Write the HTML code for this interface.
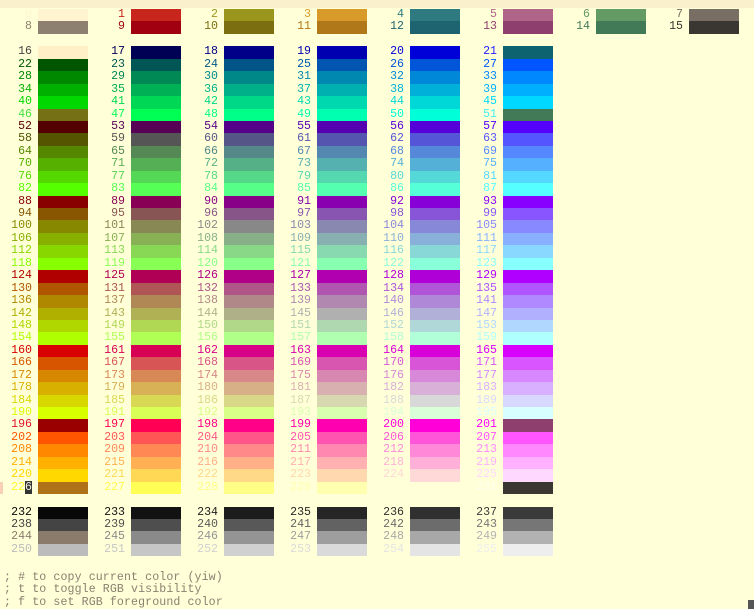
<!DOCTYPE html>
<html><head><meta charset="utf-8"><style>
body{margin:0;width:754px;height:609px;background:#ffffd8;position:relative;overflow:hidden;font-family:"Liberation Mono",monospace;font-size:11.6px}
.top{position:absolute;left:0;top:0;width:754px;height:8px;background:#faf0cc}
.g{position:absolute;left:0;top:9px}
.r{display:flex;height:12.45px;line-height:12.45px;white-space:nowrap}
.c{width:93px;height:12.45px;flex:none}
.c i{display:inline-block;width:32px;text-align:right;font-style:normal;color:var(--c);vertical-align:top}
.c b{display:inline-block;width:50px;height:12.45px;margin-left:6px;vertical-align:top;background:var(--c)}
.cur{background:#333;color:#f0f0e0}
.cm{color:#8a8070;padding-left:4px;height:12.45px;line-height:12.45px;white-space:pre;letter-spacing:0.1px;position:relative;top:3px}
</style></head><body>
<div class="top"></div>
<div style="position:absolute;left:0;top:482px;width:3px;height:12.45px;background:#f8d0b8"></div>
<div class="g">
<div class="r"><span class="c" style="--c:#fff3d0"><i>0</i><b></b></span><span class="c" style="--c:#c8251c"><i>1</i><b></b></span><span class="c" style="--c:#9a951c"><i>2</i><b></b></span><span class="c" style="--c:#d89a28"><i>3</i><b></b></span><span class="c" style="--c:#2e7a80"><i>4</i><b></b></span><span class="c" style="--c:#b06488"><i>5</i><b></b></span><span class="c" style="--c:#649a64"><i>6</i><b></b></span><span class="c" style="--c:#786e64"><i>7</i><b></b></span></div>
<div class="r"><span class="c" style="--c:#8e8070"><i>8</i><b></b></span><span class="c" style="--c:#a00010"><i>9</i><b></b></span><span class="c" style="--c:#7a6e10"><i>10</i><b></b></span><span class="c" style="--c:#b07818"><i>11</i><b></b></span><span class="c" style="--c:#1e6470"><i>12</i><b></b></span><span class="c" style="--c:#8e3f6e"><i>13</i><b></b></span><span class="c" style="--c:#427a58"><i>14</i><b></b></span><span class="c" style="--c:#3a3632"><i>15</i><b></b></span></div>
<div class="r"></div>
<div class="r"><span class="c" style="--c:#fff0c8"><i style="color:#444">16</i><b></b></span><span class="c" style="--c:#000055"><i>17</i><b></b></span><span class="c" style="--c:#000088"><i>18</i><b></b></span><span class="c" style="--c:#0000b0"><i>19</i><b></b></span><span class="c" style="--c:#0000d8"><i>20</i><b></b></span><span class="c" style="--c:#0d6470"><i style="color:#2020ff">21</i><b></b></span></div>
<div class="r"><span class="c" style="--c:#005500"><i>22</i><b></b></span><span class="c" style="--c:#005555"><i>23</i><b></b></span><span class="c" style="--c:#005588"><i>24</i><b></b></span><span class="c" style="--c:#0055b0"><i>25</i><b></b></span><span class="c" style="--c:#0055d8"><i>26</i><b></b></span><span class="c" style="--c:#0055ff"><i>27</i><b></b></span></div>
<div class="r"><span class="c" style="--c:#008800"><i>28</i><b></b></span><span class="c" style="--c:#008855"><i>29</i><b></b></span><span class="c" style="--c:#008888"><i>30</i><b></b></span><span class="c" style="--c:#0088b0"><i>31</i><b></b></span><span class="c" style="--c:#0088d8"><i>32</i><b></b></span><span class="c" style="--c:#0088ff"><i>33</i><b></b></span></div>
<div class="r"><span class="c" style="--c:#00b000"><i>34</i><b></b></span><span class="c" style="--c:#00b055"><i>35</i><b></b></span><span class="c" style="--c:#00b088"><i>36</i><b></b></span><span class="c" style="--c:#00b0b0"><i>37</i><b></b></span><span class="c" style="--c:#00b0d8"><i>38</i><b></b></span><span class="c" style="--c:#00b0ff"><i>39</i><b></b></span></div>
<div class="r"><span class="c" style="--c:#00d800"><i>40</i><b></b></span><span class="c" style="--c:#00d855"><i>41</i><b></b></span><span class="c" style="--c:#00d888"><i>42</i><b></b></span><span class="c" style="--c:#00d8b0"><i>43</i><b></b></span><span class="c" style="--c:#00d8d8"><i>44</i><b></b></span><span class="c" style="--c:#00d8ff"><i>45</i><b></b></span></div>
<div class="r"><span class="c" style="--c:#757015"><i style="color:#40e040">46</i><b></b></span><span class="c" style="--c:#00ff55"><i>47</i><b></b></span><span class="c" style="--c:#00ff88"><i>48</i><b></b></span><span class="c" style="--c:#00ffb0"><i>49</i><b></b></span><span class="c" style="--c:#00ffd8"><i>50</i><b></b></span><span class="c" style="--c:#427a58"><i style="color:#40f0f0">51</i><b></b></span></div>
<div class="r"><span class="c" style="--c:#550000"><i>52</i><b></b></span><span class="c" style="--c:#550055"><i>53</i><b></b></span><span class="c" style="--c:#550088"><i>54</i><b></b></span><span class="c" style="--c:#5500b0"><i>55</i><b></b></span><span class="c" style="--c:#5500d8"><i>56</i><b></b></span><span class="c" style="--c:#5500ff"><i>57</i><b></b></span></div>
<div class="r"><span class="c" style="--c:#555500"><i>58</i><b></b></span><span class="c" style="--c:#555555"><i>59</i><b></b></span><span class="c" style="--c:#555588"><i>60</i><b></b></span><span class="c" style="--c:#5555b0"><i>61</i><b></b></span><span class="c" style="--c:#5555d8"><i>62</i><b></b></span><span class="c" style="--c:#5555ff"><i>63</i><b></b></span></div>
<div class="r"><span class="c" style="--c:#558800"><i>64</i><b></b></span><span class="c" style="--c:#558855"><i>65</i><b></b></span><span class="c" style="--c:#558888"><i>66</i><b></b></span><span class="c" style="--c:#5588b0"><i>67</i><b></b></span><span class="c" style="--c:#5588d8"><i>68</i><b></b></span><span class="c" style="--c:#5588ff"><i>69</i><b></b></span></div>
<div class="r"><span class="c" style="--c:#55b000"><i>70</i><b></b></span><span class="c" style="--c:#55b055"><i>71</i><b></b></span><span class="c" style="--c:#55b088"><i>72</i><b></b></span><span class="c" style="--c:#55b0b0"><i>73</i><b></b></span><span class="c" style="--c:#55b0d8"><i>74</i><b></b></span><span class="c" style="--c:#55b0ff"><i>75</i><b></b></span></div>
<div class="r"><span class="c" style="--c:#55d800"><i>76</i><b></b></span><span class="c" style="--c:#55d855"><i>77</i><b></b></span><span class="c" style="--c:#55d888"><i>78</i><b></b></span><span class="c" style="--c:#55d8b0"><i>79</i><b></b></span><span class="c" style="--c:#55d8d8"><i>80</i><b></b></span><span class="c" style="--c:#55d8ff"><i>81</i><b></b></span></div>
<div class="r"><span class="c" style="--c:#55ff00"><i>82</i><b></b></span><span class="c" style="--c:#55ff55"><i>83</i><b></b></span><span class="c" style="--c:#55ff88"><i>84</i><b></b></span><span class="c" style="--c:#55ffb0"><i>85</i><b></b></span><span class="c" style="--c:#55ffd8"><i>86</i><b></b></span><span class="c" style="--c:#55ffff"><i>87</i><b></b></span></div>
<div class="r"><span class="c" style="--c:#880000"><i>88</i><b></b></span><span class="c" style="--c:#880055"><i>89</i><b></b></span><span class="c" style="--c:#880088"><i>90</i><b></b></span><span class="c" style="--c:#8800b0"><i>91</i><b></b></span><span class="c" style="--c:#8800d8"><i>92</i><b></b></span><span class="c" style="--c:#8800ff"><i>93</i><b></b></span></div>
<div class="r"><span class="c" style="--c:#885500"><i>94</i><b></b></span><span class="c" style="--c:#885555"><i>95</i><b></b></span><span class="c" style="--c:#885588"><i>96</i><b></b></span><span class="c" style="--c:#8855b0"><i>97</i><b></b></span><span class="c" style="--c:#8855d8"><i>98</i><b></b></span><span class="c" style="--c:#8855ff"><i>99</i><b></b></span></div>
<div class="r"><span class="c" style="--c:#888800"><i>100</i><b></b></span><span class="c" style="--c:#888855"><i>101</i><b></b></span><span class="c" style="--c:#888888"><i>102</i><b></b></span><span class="c" style="--c:#8888b0"><i>103</i><b></b></span><span class="c" style="--c:#8888d8"><i>104</i><b></b></span><span class="c" style="--c:#8888ff"><i>105</i><b></b></span></div>
<div class="r"><span class="c" style="--c:#88b000"><i>106</i><b></b></span><span class="c" style="--c:#88b055"><i>107</i><b></b></span><span class="c" style="--c:#88b088"><i>108</i><b></b></span><span class="c" style="--c:#88b0b0"><i>109</i><b></b></span><span class="c" style="--c:#88b0d8"><i>110</i><b></b></span><span class="c" style="--c:#88b0ff"><i>111</i><b></b></span></div>
<div class="r"><span class="c" style="--c:#88d800"><i>112</i><b></b></span><span class="c" style="--c:#88d855"><i>113</i><b></b></span><span class="c" style="--c:#88d888"><i>114</i><b></b></span><span class="c" style="--c:#88d8b0"><i>115</i><b></b></span><span class="c" style="--c:#88d8d8"><i>116</i><b></b></span><span class="c" style="--c:#88d8ff"><i>117</i><b></b></span></div>
<div class="r"><span class="c" style="--c:#88ff00"><i>118</i><b></b></span><span class="c" style="--c:#88ff55"><i>119</i><b></b></span><span class="c" style="--c:#88ff88"><i>120</i><b></b></span><span class="c" style="--c:#88ffb0"><i>121</i><b></b></span><span class="c" style="--c:#88ffd8"><i>122</i><b></b></span><span class="c" style="--c:#88ffff"><i>123</i><b></b></span></div>
<div class="r"><span class="c" style="--c:#b00000"><i>124</i><b></b></span><span class="c" style="--c:#b00055"><i>125</i><b></b></span><span class="c" style="--c:#b00088"><i>126</i><b></b></span><span class="c" style="--c:#b000b0"><i>127</i><b></b></span><span class="c" style="--c:#b000d8"><i>128</i><b></b></span><span class="c" style="--c:#b000ff"><i>129</i><b></b></span></div>
<div class="r"><span class="c" style="--c:#b05500"><i>130</i><b></b></span><span class="c" style="--c:#b05555"><i>131</i><b></b></span><span class="c" style="--c:#b05588"><i>132</i><b></b></span><span class="c" style="--c:#b055b0"><i>133</i><b></b></span><span class="c" style="--c:#b055d8"><i>134</i><b></b></span><span class="c" style="--c:#b055ff"><i>135</i><b></b></span></div>
<div class="r"><span class="c" style="--c:#b08800"><i>136</i><b></b></span><span class="c" style="--c:#b08855"><i>137</i><b></b></span><span class="c" style="--c:#b08888"><i>138</i><b></b></span><span class="c" style="--c:#b088b0"><i>139</i><b></b></span><span class="c" style="--c:#b088d8"><i>140</i><b></b></span><span class="c" style="--c:#b088ff"><i>141</i><b></b></span></div>
<div class="r"><span class="c" style="--c:#b0b000"><i>142</i><b></b></span><span class="c" style="--c:#b0b055"><i>143</i><b></b></span><span class="c" style="--c:#b0b088"><i>144</i><b></b></span><span class="c" style="--c:#b0b0b0"><i>145</i><b></b></span><span class="c" style="--c:#b0b0d8"><i>146</i><b></b></span><span class="c" style="--c:#b0b0ff"><i>147</i><b></b></span></div>
<div class="r"><span class="c" style="--c:#b0d800"><i>148</i><b></b></span><span class="c" style="--c:#b0d855"><i>149</i><b></b></span><span class="c" style="--c:#b0d888"><i>150</i><b></b></span><span class="c" style="--c:#b0d8b0"><i>151</i><b></b></span><span class="c" style="--c:#b0d8d8"><i>152</i><b></b></span><span class="c" style="--c:#b0d8ff"><i>153</i><b></b></span></div>
<div class="r"><span class="c" style="--c:#b0ff00"><i>154</i><b></b></span><span class="c" style="--c:#b0ff55"><i>155</i><b></b></span><span class="c" style="--c:#b0ff88"><i>156</i><b></b></span><span class="c" style="--c:#b0ffb0"><i>157</i><b></b></span><span class="c" style="--c:#b0ffd8"><i>158</i><b></b></span><span class="c" style="--c:#b0ffff"><i>159</i><b></b></span></div>
<div class="r"><span class="c" style="--c:#d80000"><i>160</i><b></b></span><span class="c" style="--c:#d80055"><i>161</i><b></b></span><span class="c" style="--c:#d80088"><i>162</i><b></b></span><span class="c" style="--c:#d800b0"><i>163</i><b></b></span><span class="c" style="--c:#d800d8"><i>164</i><b></b></span><span class="c" style="--c:#d800ff"><i>165</i><b></b></span></div>
<div class="r"><span class="c" style="--c:#d85500"><i>166</i><b></b></span><span class="c" style="--c:#d85555"><i>167</i><b></b></span><span class="c" style="--c:#d85588"><i>168</i><b></b></span><span class="c" style="--c:#d855b0"><i>169</i><b></b></span><span class="c" style="--c:#d855d8"><i>170</i><b></b></span><span class="c" style="--c:#d855ff"><i>171</i><b></b></span></div>
<div class="r"><span class="c" style="--c:#d88800"><i>172</i><b></b></span><span class="c" style="--c:#d88855"><i>173</i><b></b></span><span class="c" style="--c:#d88888"><i>174</i><b></b></span><span class="c" style="--c:#d888b0"><i>175</i><b></b></span><span class="c" style="--c:#d888d8"><i>176</i><b></b></span><span class="c" style="--c:#d888ff"><i>177</i><b></b></span></div>
<div class="r"><span class="c" style="--c:#d8b000"><i>178</i><b></b></span><span class="c" style="--c:#d8b055"><i>179</i><b></b></span><span class="c" style="--c:#d8b088"><i>180</i><b></b></span><span class="c" style="--c:#d8b0b0"><i>181</i><b></b></span><span class="c" style="--c:#d8b0d8"><i>182</i><b></b></span><span class="c" style="--c:#d8b0ff"><i>183</i><b></b></span></div>
<div class="r"><span class="c" style="--c:#d8d800"><i>184</i><b></b></span><span class="c" style="--c:#d8d855"><i>185</i><b></b></span><span class="c" style="--c:#d8d888"><i>186</i><b></b></span><span class="c" style="--c:#d8d8b0"><i>187</i><b></b></span><span class="c" style="--c:#d8d8d8"><i>188</i><b></b></span><span class="c" style="--c:#d8d8ff"><i>189</i><b></b></span></div>
<div class="r"><span class="c" style="--c:#d8ff00"><i>190</i><b></b></span><span class="c" style="--c:#d8ff55"><i>191</i><b></b></span><span class="c" style="--c:#d8ff88"><i>192</i><b></b></span><span class="c" style="--c:#d8ffb0"><i>193</i><b></b></span><span class="c" style="--c:#d8ffd8"><i>194</i><b></b></span><span class="c" style="--c:#d8ffff"><i>195</i><b></b></span></div>
<div class="r"><span class="c" style="--c:#9a0000"><i style="color:#e01030">196</i><b></b></span><span class="c" style="--c:#ff0055"><i>197</i><b></b></span><span class="c" style="--c:#ff0088"><i>198</i><b></b></span><span class="c" style="--c:#ff00b0"><i>199</i><b></b></span><span class="c" style="--c:#ff00d8"><i>200</i><b></b></span><span class="c" style="--c:#8e3f6e"><i style="color:#ff00ff">201</i><b></b></span></div>
<div class="r"><span class="c" style="--c:#ff5500"><i>202</i><b></b></span><span class="c" style="--c:#ff5555"><i>203</i><b></b></span><span class="c" style="--c:#ff5588"><i>204</i><b></b></span><span class="c" style="--c:#ff55b0"><i>205</i><b></b></span><span class="c" style="--c:#ff55d8"><i>206</i><b></b></span><span class="c" style="--c:#ff55ff"><i>207</i><b></b></span></div>
<div class="r"><span class="c" style="--c:#ff8800"><i>208</i><b></b></span><span class="c" style="--c:#ff8855"><i>209</i><b></b></span><span class="c" style="--c:#ff8888"><i>210</i><b></b></span><span class="c" style="--c:#ff88b0"><i>211</i><b></b></span><span class="c" style="--c:#ff88d8"><i>212</i><b></b></span><span class="c" style="--c:#ff88ff"><i>213</i><b></b></span></div>
<div class="r"><span class="c" style="--c:#ffb000"><i>214</i><b></b></span><span class="c" style="--c:#ffb055"><i>215</i><b></b></span><span class="c" style="--c:#ffb088"><i>216</i><b></b></span><span class="c" style="--c:#ffb0b0"><i>217</i><b></b></span><span class="c" style="--c:#ffb0d8"><i>218</i><b></b></span><span class="c" style="--c:#ffb0ff"><i>219</i><b></b></span></div>
<div class="r"><span class="c" style="--c:#ffd800"><i>220</i><b></b></span><span class="c" style="--c:#ffd855"><i>221</i><b></b></span><span class="c" style="--c:#ffd888"><i>222</i><b></b></span><span class="c" style="--c:#ffd8b0"><i>223</i><b></b></span><span class="c" style="--c:#ffd8d8"><i>224</i><b></b></span><span class="c" style="--c:#ffd8ff"><i>225</i><b></b></span></div>
<div class="r"><span class="c" style="--c:#b07218"><i style="color:#ffff30">22<span class="cur">6</span></i><b></b></span><span class="c" style="--c:#ffff55"><i>227</i><b></b></span><span class="c" style="--c:#ffff88"><i>228</i><b></b></span><span class="c" style="--c:#ffffb0"><i>229</i><b></b></span><span class="c" style="--c:#ffffd8"><i>230</i><b></b></span><span class="c" style="--c:#3a3632"><i style="color:#fffff0">231</i><b></b></span></div>
<div class="r"></div>
<div class="r"><span class="c" style="--c:#080808"><i>232</i><b></b></span><span class="c" style="--c:#121212"><i>233</i><b></b></span><span class="c" style="--c:#1c1c1c"><i>234</i><b></b></span><span class="c" style="--c:#262626"><i>235</i><b></b></span><span class="c" style="--c:#303030"><i>236</i><b></b></span><span class="c" style="--c:#3a3a3a"><i>237</i><b></b></span></div>
<div class="r"><span class="c" style="--c:#444444"><i>238</i><b></b></span><span class="c" style="--c:#4e4e4e"><i>239</i><b></b></span><span class="c" style="--c:#585858"><i>240</i><b></b></span><span class="c" style="--c:#626262"><i>241</i><b></b></span><span class="c" style="--c:#6c6c6c"><i>242</i><b></b></span><span class="c" style="--c:#767676"><i>243</i><b></b></span></div>
<div class="r"><span class="c" style="--c:#8b7b6b"><i>244</i><b></b></span><span class="c" style="--c:#8a8a8a"><i>245</i><b></b></span><span class="c" style="--c:#949494"><i>246</i><b></b></span><span class="c" style="--c:#9e9e9e"><i>247</i><b></b></span><span class="c" style="--c:#a8a8a8"><i>248</i><b></b></span><span class="c" style="--c:#b2b2b2"><i>249</i><b></b></span></div>
<div class="r"><span class="c" style="--c:#bcbcbc"><i>250</i><b></b></span><span class="c" style="--c:#c6c6c6"><i>251</i><b></b></span><span class="c" style="--c:#d0d0d0"><i>252</i><b></b></span><span class="c" style="--c:#dadada"><i>253</i><b></b></span><span class="c" style="--c:#e4e4e4"><i>254</i><b></b></span><span class="c" style="--c:#eeeeee"><i>255</i><b></b></span></div>
<div class="r"></div>
<div class="cm">; # to copy current color (yiw)</div>
<div class="cm">; t to toggle RGB visibility</div>
<div class="cm">; f to set RGB foreground color</div>
</div>
<div style="position:absolute;left:748px;top:600px;width:6px;height:9px;background:#555"></div>
</body></html>
